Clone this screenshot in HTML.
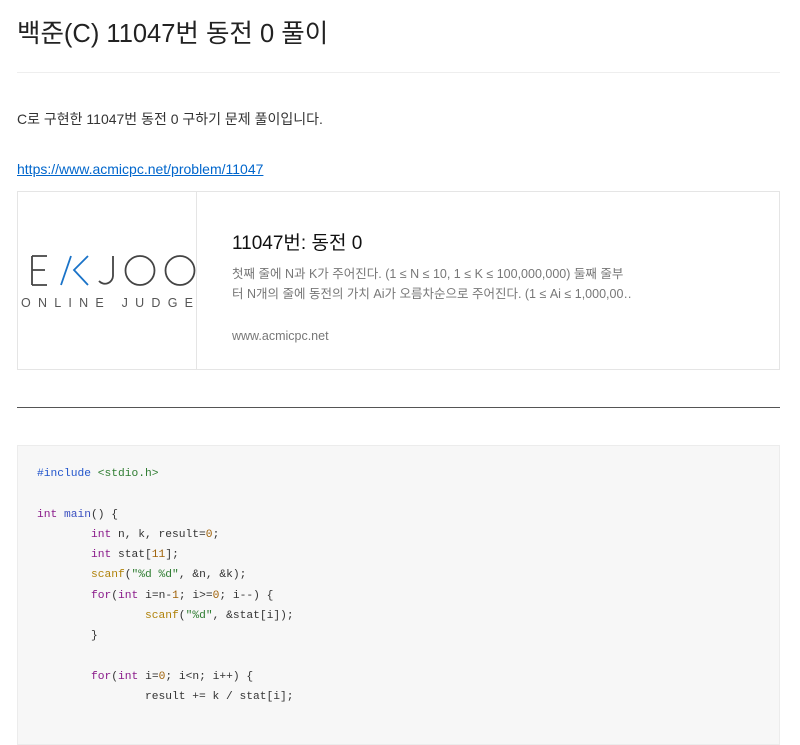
<!DOCTYPE html>
<html><head><meta charset="utf-8"><style>
body{margin:0;background:#fff;font-family:"Liberation Sans","Noto Sans CJK KR",sans-serif;color:#333;width:800px;height:710px;overflow:hidden;position:relative}
.a{position:absolute}
h1{position:absolute;left:17px;top:13px;margin:0;font-weight:normal;font-size:25.5px;color:#222}
.hr1{left:17px;top:72px;width:763px;height:1px;background:#eee}
.p{left:17px;top:109px;font-size:14px;color:#333}
.link{left:17px;top:161px;font-size:14px;color:#0066cc;text-decoration:underline}
.card{left:17px;top:191px;width:763px;height:179px;border:1px solid #e5e5e5;box-sizing:border-box}
.logo{left:0;top:0;width:178px;height:177px;border-right:1px solid #e5e5e5}
.hr2{left:17px;top:407px;width:763px;height:1px;background:#555}
.code{left:17px;top:445px;width:763px;height:300px;background:#f7f7f7;border:1px solid #ececec;box-sizing:border-box}
pre{margin:0;position:absolute;left:19px;top:18px;font-family:"Liberation Mono",monospace;font-size:11.25px;line-height:20.3px;color:#333}
.k{color:#8a1a8a}.f{color:#3a4fc0}.s{color:#2f7d32}.y{color:#b0820a}.n{color:#a0620a}.pp{color:#2255cc}
.d{white-space:nowrap;overflow:hidden;width:400px}
</style></head><body>
<h1>백준(C) 11047번 동전 0 풀이</h1>
<div class="a hr1"></div>
<div class="a p">C로 구현한 11047번 동전 0 구하기 문제 풀이입니다.</div>
<div class="a link">https://www.acmicpc.net/problem/11047</div>
<div class="a card">
 <div class="a logo">
  <svg width="178" height="177" style="position:absolute;left:0;top:0">
   <g fill="none" stroke="#444" stroke-width="1.8">
    <path d="M14 64v29M14 64h15M14 78h13M14 93h15"/>
    <path d="M43 93l10-29" stroke="#1a73c8"/>
    <path d="M70 64l-14 14 14 15" stroke="#1a73c8"/>
    <path d="M95 64v20a8 8 0 0 1-14 5"/>
    <circle cx="122" cy="78.5" r="14.5"/>
    <circle cx="162" cy="78.5" r="14.5"/>
   </g>
   <text x="3" y="115" font-family="Liberation Sans" font-size="12.5" fill="#555" textLength="172" lengthAdjust="spacing">ONLINE JUDGE</text>
  </svg>
 </div>
 <div class="a" style="left:214px;top:36px;font-size:19px;color:#111">11047번: 동전 0</div>
 <div class="a" style="left:214px;top:72px;font-size:12.5px;line-height:20px;color:#777">
  <div class="d">첫째 줄에 N과 K가 주어진다. (1 ≤ N ≤ 10, 1 ≤ K ≤ 100,000,000) 둘째 줄부</div>
  <div class="d">터 N개의 줄에 동전의 가치 Ai가 오름차순으로 주어진다. (1 ≤ Ai ≤ 1,000,00…</div>
 </div>
 <div class="a" style="left:214px;top:137px;font-size:12.5px;color:#777">www.acmicpc.net</div>
</div>
<div class="a hr2"></div>
<div class="a code"><pre><span class="pp">#include</span> <span class="s">&lt;stdio.h&gt;</span>

<span class="k">int</span> <span class="f">main</span>() {
        <span class="k">int</span> n, k, result=<span class="n">0</span>;
        <span class="k">int</span> stat[<span class="n">11</span>];
        <span class="y">scanf</span>(<span class="s">"%d %d"</span>, &amp;n, &amp;k);
        <span class="k">for</span>(<span class="k">int</span> i=n-<span class="n">1</span>; i&gt;=<span class="n">0</span>; i--) {
                <span class="y">scanf</span>(<span class="s">"%d"</span>, &amp;stat[i]);
        }

        <span class="k">for</span>(<span class="k">int</span> i=<span class="n">0</span>; i&lt;n; i++) {
                result += k / stat[i];
</pre></div>
</body></html>
